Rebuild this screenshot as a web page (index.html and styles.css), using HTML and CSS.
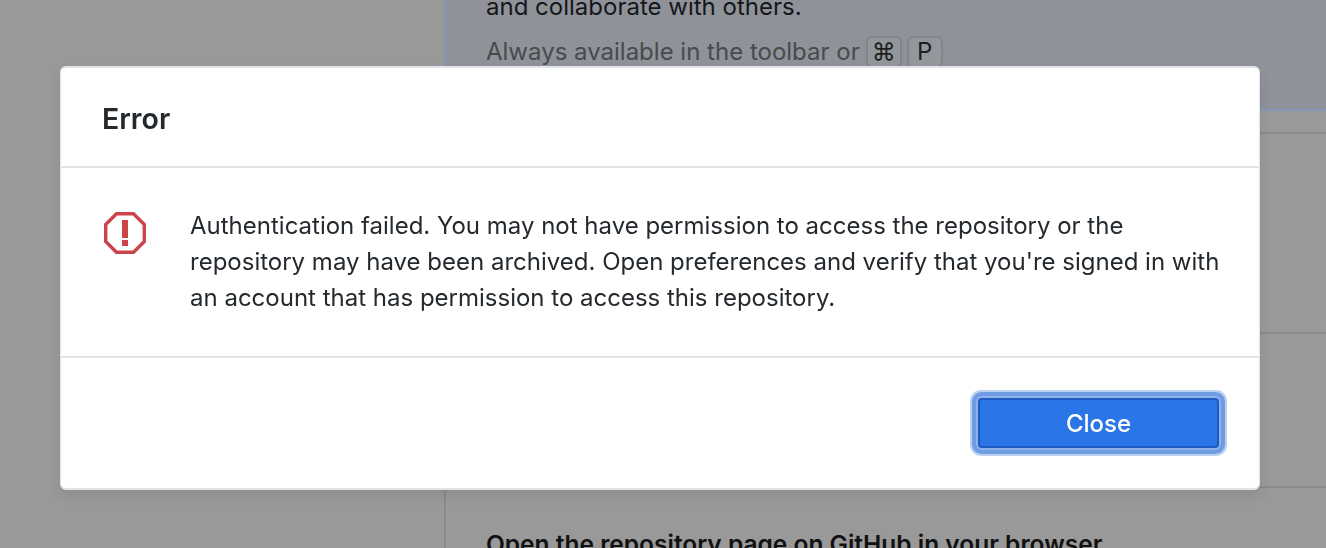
FILE: index.html
```html
<!DOCTYPE html>
<html lang="en">
<head>
<meta charset="utf-8">
<title>Error</title>
<link rel="stylesheet" href="styles.css">
</head>
<body>
<div class="app">
  <aside class="sidebar"></aside>
  <main class="content">
    <section class="panel">
      <p class="panel-text">and collaborate with others.</p>
      <p class="panel-hint"><span>Always available in the toolbar or</span> <kbd class="key">⌘</kbd> <kbd class="key">P</kbd></p>
    </section>
    <div class="gap-row"></div>
    <div class="row row-one"></div>
    <div class="row row-two"></div>
    <div class="row row-last"><strong class="row-title">Open the repository page on GitHub in your browser</strong></div>
  </main>
</div>
<div class="overlay">
  <div class="dialog" role="dialog">
    <header class="dialog-header"><h1 class="dialog-title">Error</h1></header>
    <div class="dialog-body">
      <svg class="error-icon" viewBox="0 0 42 42" aria-hidden="true">
        <polygon class="error-ring" points="12.5,1.7 29.5,1.7 40.3,12.5 40.3,29.5 29.5,40.3 12.5,40.3 1.7,29.5 1.7,12.5"/>
        <rect class="error-mark" x="18" y="8" width="6" height="18"/>
        <rect class="error-mark" x="18" y="28" width="6" height="6"/>
      </svg>
      <p class="dialog-message">Authentication failed. You may not have permission to access the repository or the repository may have been archived. Open preferences and verify that you're signed in with an account that has permission to access this repository.</p>
    </div>
    <footer class="dialog-footer"><button class="close-button" type="button">Close</button></footer>
  </div>
</div>
</body>
</html>
```
FILE: styles.css
```css
* { box-sizing: border-box; }
html, body { margin: 0; height: 100%; overflow: hidden; }
body { font-family: Inter, "Liberation Sans", sans-serif; background: #999; color: #1c1e21; }

.app { display: flex; height: 548px; }
.sidebar { width: 444px; flex: none; }
.content { flex: 1; border-left: 2px solid #8a8a8a; display: flex; flex-direction: column; min-width: 0; }
.content > * { flex: none; }

.panel { height: 111px; background: #8f9298; border-bottom: 2px solid #8097b8; padding: 0 0 0 40px; margin-left: -2px; border-left: 2px solid #8097b8; overflow: hidden; }
.panel-text { margin: -11px 0 0; font-size: 24px; line-height: 36px; color: #151719; }
.panel-hint { margin: 9px 0 0; font-size: 24px; line-height: 36px; color: #474a4f; display: flex; align-items: center; gap: 5px; white-space: nowrap; }
.key { font-family: inherit; font-size: 24px; color: #1c1e21; border: 2px solid #82858a; border-radius: 6px; width: 36px; height: 32px; line-height: 28px; text-align: center; background: #93969b; }
.key:first-of-type { margin-left: 1px; }

.gap-row { height: 23px; border-bottom: 2px solid #8a8a8a; }
.row { border-bottom: 2px solid #8a8a8a; }
.row-one { height: 200px; }
.row-two { height: 154px; }
.row-last { border: 0; padding: 38px 0 0 40px; }
.row-title { font-size: 24.5px; line-height: 36px; font-weight: 600; color: #111; white-space: nowrap; }

.overlay { position: fixed; inset: 0; }
.dialog { position: absolute; left: 60px; top: 66px; width: 1200px; height: 424px; background: #fff; border: 2px solid #e1e4e8; border-width: 2px 1px 2px 1px; border-radius: 6px; display: flex; flex-direction: column; box-shadow: 0 6px 12px rgba(0,0,0,.08); }
.dialog-header { height: 100px; border-bottom: 2px solid #e1e4e8; padding: 3px 0 0 41px; display: flex; align-items: center; }
.dialog-title { margin: 0; font-size: 28.5px; font-weight: 600; color: #24292e; }
.dialog-body { height: 190px; border-bottom: 2px solid #e1e4e8; padding: 40px 0 0 43px; display: flex; align-items: flex-start; }
.error-icon { width: 42px; height: 42px; margin-top: 4px; flex: none; }
.error-ring { fill: none; stroke: #cb444a; stroke-width: 3.4; }
.error-mark { fill: #cb444a; }
.dialog-message { margin: 0 0 0 44px; width: 1040px; font-size: 24px; line-height: 36px; color: #24292e; }
.dialog-footer { flex: 1; display: flex; justify-content: flex-end; padding: 40px 40px 0 0; align-items: flex-start; }
.close-button { width: 241px; height: 50px; background: #2a75e8; color: #fff; border: 2px solid #1c5cc0; border-radius: 4px; font: 500 24px Inter, "Liberation Sans", sans-serif; box-shadow: 0 0 0 2px #8fb2ea, 0 0 0 6px #6f9ce2, 0 0 0 8px #bcd1f2; }
```
